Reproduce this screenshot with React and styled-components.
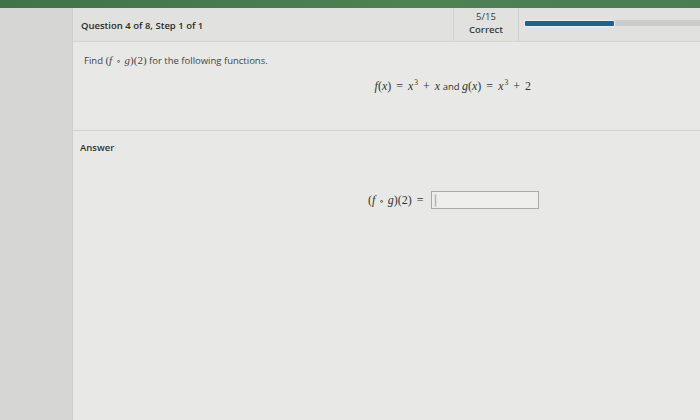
import React from 'react';
import styled, { createGlobalStyle } from 'styled-components';

const GlobalStyle = createGlobalStyle`
  html, body {
    margin: 0;
    padding: 0;
    background: #d8d9d6;
    font-family: "Open Sans", "Liberation Sans", sans-serif;
  }
`;

// --- LAYOUT ---

const Page = styled.div`
  width: 700px;
  height: 420px;
  display: flex;
  flex-direction: column;
  overflow: hidden;
`;

const TopBar = styled.div`
  height: 8px;
  background: linear-gradient(90deg, #3f7447, #4d8253 60%, #4a7d50);
`;

const Body = styled.div`
  flex: 1;
  display: flex;
`;

const Gutter = styled.div`
  width: 72px;
  background: #d6d7d4;
  border-right: 1px solid #cfd0cd;
`;

const Main = styled.div`
  flex: 1;
  display: flex;
  flex-direction: column;
  background: #e8e9e6;
`;

// --- HEADER ---

const Header = styled.div`
  height: 33px;
  display: flex;
  align-items: stretch;
  background: #e1e2df;
  border-bottom: 1px solid #d3d4d1;
`;

const Title = styled.div`
  flex: 1;
  display: flex;
  align-items: center;
  padding: 2px 0 0 8px;
  font-size: 9.5px;
  font-weight: 600;
  color: #2a2a2a;
`;

const Score = styled.div`
  width: 64px;
  display: flex;
  flex-direction: column;
  align-items: center;
  justify-content: center;
  gap: 1px;
  padding-bottom: 3px;
  border-left: 1px solid #d3d4d1;
  border-right: 1px solid #d3d4d1;
  color: #3a3a3a;
  font-size: 9.5px;
  line-height: 12px;
`;

const ScoreLabel = styled.span`
  font-weight: 600;
`;

const ProgressArea = styled.div`
  width: 175px;
  display: flex;
  align-items: center;
  padding: 0 0 3px 6px;
`;

const Track = styled.div`
  flex: 1;
  height: 6px;
  display: flex;
  align-items: center;
  background: #cbcccb;
`;

const Fill = styled.div`
  height: 5px;
  background: #1f5f94;
  border-radius: 1px;
  box-shadow: 0 0 0 1px #e9eef2;
`;

// --- QUESTION ---

const Question = styled.div`
  height: 88px;
  display: flex;
  flex-direction: column;
  border-bottom: 1px solid #d2d3d0;
`;

const Prompt = styled.div`
  padding: 12px 0 0 11px;
  font-size: 9.5px;
  color: #444;
`;

const InlineMath = styled.span`
  font-family: "Liberation Serif", "DejaVu Serif", serif;
  font-size: 11px;
`;

const MathRow = styled.div`
  display: flex;
  align-items: baseline;
  justify-content: flex-end;
  padding: 12px 169px 0 0;
  font-family: "Liberation Serif", "DejaVu Serif", serif;
  font-size: 12px;
  color: #333;
`;

const Var = styled.i`
  font-family: "Liberation Serif", "DejaVu Serif", serif;
`;

const Sup = styled.span`
  font-size: 7.5px;
  position: relative;
  top: -5px;
  margin-left: 1px;
`;

const Word = styled.span`
  font-family: "Open Sans", "Liberation Sans", sans-serif;
  font-size: 9.5px;
`;

const Op = styled.span`
  margin: 0 5px;
`;

const Ring = styled.span`
  margin: 0 4px;
  font-size: 9px;
  font-style: normal;
`;

// --- ANSWER ---

const AnswerSection = styled.div`
  flex: 1;
  display: flex;
  flex-direction: column;
`;

const AnswerLabel = styled.div`
  padding: 10px 0 0 7px;
  font-size: 9.5px;
  font-weight: 600;
  color: #333;
`;

const AnswerRow = styled.div`
  display: flex;
  align-items: center;
  padding: 37px 0 0 295px;
  font-family: "Liberation Serif", "DejaVu Serif", serif;
  font-size: 12px;
  color: #333;
`;

const Input = styled.div`
  width: 104px;
  height: 16px;
  margin-left: 2px;
  border: 1px solid #a9aaa8;
  background: #eeefec;
  display: flex;
  align-items: center;
  padding-left: 2px;
`;

const Caret = styled.div`
  width: 1px;
  height: 11px;
  background: #b9bab8;
  border: 1px solid #dcdddb;
`;

const FnG = () => (
  <span>
    (<Var>f</Var><Ring>∘</Ring><Var>g</Var>)(2)
  </span>
);

const App = () => {
  const correct = 5;
  const total = 15;

  return (
    <Page>
      <GlobalStyle />
      <TopBar />
      <Body>
        <Gutter />
        <Main>
          <Header>
            <Title>Question 4 of 8, Step 1 of 1</Title>
            <Score>
              <span>{correct}/{total}</span>
              <ScoreLabel>Correct</ScoreLabel>
            </Score>
            <ProgressArea>
              <Track>
                <Fill style={{ width: `${(86 / 169) * 100}%` }} />
              </Track>
            </ProgressArea>
          </Header>

          <Question>
            <Prompt>
              Find <InlineMath><FnG /></InlineMath> for the following functions.
            </Prompt>
            <MathRow>
              <Var>f</Var>(<Var>x</Var>)<Op>=</Op><Var>x</Var><Sup>3</Sup><Op>+</Op><Var>x</Var>
              <Word>&nbsp;and&nbsp;</Word>
              <Var>g</Var>(<Var>x</Var>)<Op>=</Op><Var>x</Var><Sup>3</Sup><Op>+</Op>2
            </MathRow>
          </Question>

          <AnswerSection>
            <AnswerLabel>Answer</AnswerLabel>
            <AnswerRow>
              <FnG /><Op>=</Op>
              <Input><Caret /></Input>
            </AnswerRow>
          </AnswerSection>
        </Main>
      </Body>
    </Page>
  );
};

export default App;
